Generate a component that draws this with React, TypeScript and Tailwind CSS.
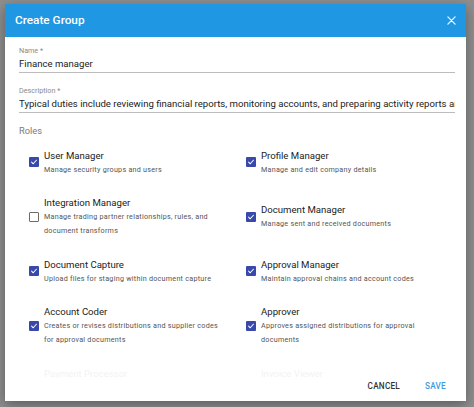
const ROLES = [
  { title: "User Manager", desc: "Manage security groups and users", checked: true },
  { title: "Profile Manager", desc: "Manage and edit company details", checked: true },
  {
    title: "Integration Manager",
    desc: "Manage trading partner relationships, rules, and document transforms",
    checked: false,
  },
  { title: "Document Manager", desc: "Manage sent and received documents", checked: true },
  { title: "Document Capture", desc: "Upload files for staging within document capture", checked: true },
  { title: "Approval Manager", desc: "Maintain approval chains and account codes", checked: true },
  {
    title: "Account Coder",
    desc: "Creates or revises distributions and supplier codes for approval documents",
    checked: true,
  },
  {
    title: "Approver",
    desc: "Approves assigned distributions for approval documents",
    checked: true,
  },
  { title: "Payment Processor", desc: "Release approved payments", checked: true },
  { title: "Invoice Viewer", desc: "View processed invoices", checked: true },
];

function Checkbox({ checked, hidden }: { checked: boolean; hidden?: boolean }) {
  if (hidden) {
    return <span className="block w-[10px] h-[10px] shrink-0" />;
  }
  if (!checked) {
    return <span className="block w-[10px] h-[10px] shrink-0 rounded-[1px] border-[1.5px] border-[#6b6b6b] bg-white" />;
  }
  return (
    <span className="flex w-[10px] h-[10px] shrink-0 items-center justify-center rounded-[1px] bg-[#3949ab]">
      <svg viewBox="0 0 10 10" className="w-[8px] h-[8px]" fill="none">
        <path d="M2 5.2l2 2 4-4.4" stroke="#fff" strokeWidth={1.3} strokeLinecap="round" strokeLinejoin="round" />
      </svg>
    </span>
  );
}

function Field({ label, value }: { label: string; value: string }) {
  return (
    <div className="w-[436px]">
      <div className="text-[7.2px] leading-[11px] text-[#8a8a8a]">{label}</div>
      <div className="h-[17px] border-b border-[#bcbcbc] overflow-hidden whitespace-nowrap text-[9.6px] leading-[16px] text-[#222]">
        {value}
      </div>
    </div>
  );
}

export default function App() {
  return (
    <div
      className="w-[474px] h-[407px] overflow-hidden bg-[#8e8e8e] pt-[4px] pl-[5px]"
      style={{ fontFamily: "Roboto, 'Noto Sans', Arial, sans-serif" }}
    >
      <div className="flex flex-col w-[461px] h-[397px] bg-white shadow-[0_4px_12px_rgba(0,0,0,0.35)] overflow-hidden">
        {/* Header */}
        <div className="flex items-center justify-between h-[33px] shrink-0 bg-[#1f97e3] pl-[10px] pr-[10px]">
          <span className="text-[11.8px] font-medium text-white">Create Group</span>
          <svg viewBox="0 0 10 10" className="w-[9px] h-[9px]" fill="none">
            <path d="M1 1l8 8M9 1l-8 8" stroke="#fff" strokeWidth={1.3} strokeLinecap="round" />
          </svg>
        </div>

        {/* Content */}
        <div className="flex-1 overflow-hidden px-[14px] pt-[8px]">
          <Field label="Name *" value="Finance manager" />
          <div className="mt-[11.5px]">
            <Field
              label="Description *"
              value="Typical duties include reviewing financial reports, monitoring accounts, and preparing activity reports and budgets"
            />
          </div>
          <div className="mt-[10.5px] text-[9.3px] leading-[16px] text-[#7a7a7a]">Roles</div>

          <div className="mt-[8.5px] ml-[10px] grid grid-cols-[217px_1fr] gap-y-[18.5px]">
            {ROLES.map((r, i) => {
              const faint = i >= 8;
              return (
                <div key={r.title} className="flex items-center gap-[5px]">
                  <Checkbox checked={r.checked} hidden={faint} />
                  <div className="max-w-[184px]">
                    <div className={`text-[9.6px] leading-[15px] ${faint ? "text-[#f3f3f3]" : "text-[#222]"}`}>
                      {r.title}
                    </div>
                    <div
                      className={`text-[7.2px] leading-[14px] tracking-[0.25px] ${faint ? "text-white" : "text-[#555]"}`}
                    >
                      {r.desc}
                    </div>
                  </div>
                </div>
              );
            })}
          </div>
        </div>

        {/* Actions */}
        <div className="flex h-[23px] shrink-0 items-center justify-end gap-[25px] bg-white pr-[20px] pb-[7px]">
          <span className="text-[8.2px] font-medium tracking-[0.25px] text-[#333]">CANCEL</span>
          <span className="text-[8.2px] font-medium tracking-[0.25px] text-[#3d9be0]">SAVE</span>
        </div>
      </div>
    </div>
  );
}
